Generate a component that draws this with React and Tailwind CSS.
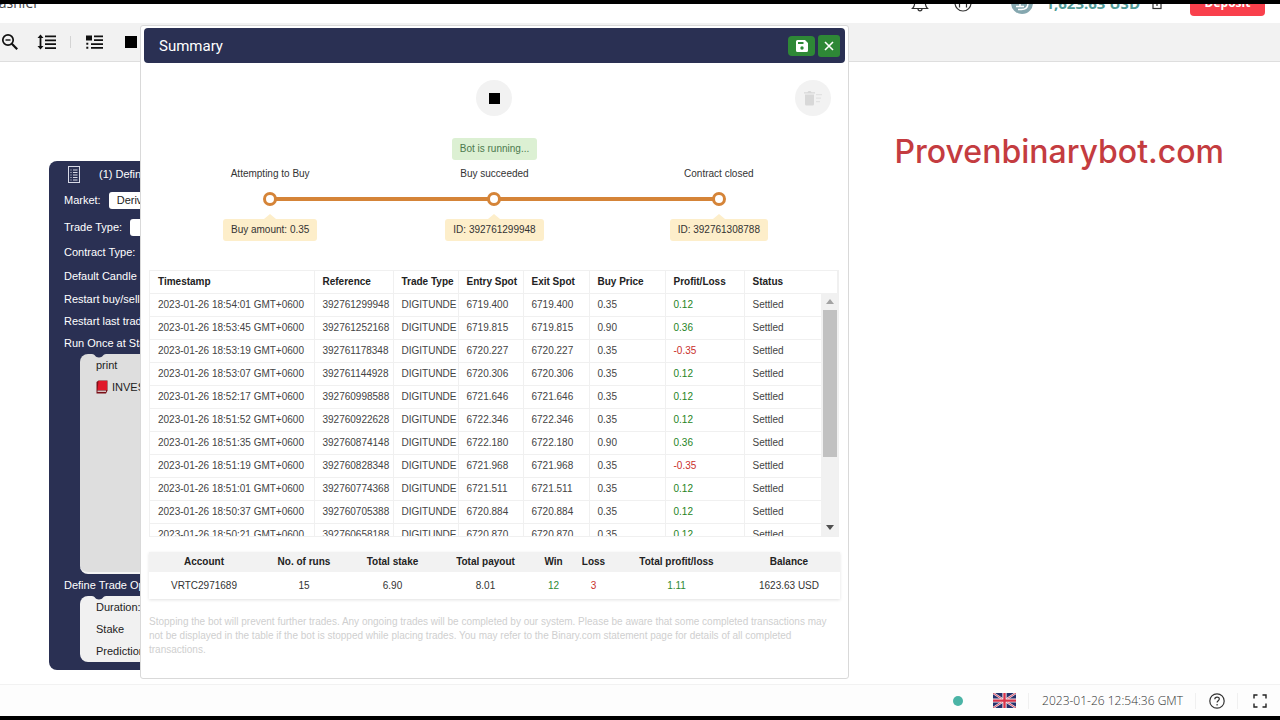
import React, { useState } from 'react';

const transactions = [
    { time: '2023-01-26 18:54:01 GMT+0600', ref: '392761299948', spot: '6719.400', price: '0.35', profit: '0.12' },
    { time: '2023-01-26 18:53:45 GMT+0600', ref: '392761252168', spot: '6719.815', price: '0.90', profit: '0.36' },
    { time: '2023-01-26 18:53:19 GMT+0600', ref: '392761178348', spot: '6720.227', price: '0.35', profit: '-0.35' },
    { time: '2023-01-26 18:53:07 GMT+0600', ref: '392761144928', spot: '6720.306', price: '0.35', profit: '0.12' },
    { time: '2023-01-26 18:52:17 GMT+0600', ref: '392760998588', spot: '6721.646', price: '0.35', profit: '0.12' },
    { time: '2023-01-26 18:51:52 GMT+0600', ref: '392760922628', spot: '6722.346', price: '0.35', profit: '0.12' },
    { time: '2023-01-26 18:51:35 GMT+0600', ref: '392760874148', spot: '6722.180', price: '0.90', profit: '0.36' },
    { time: '2023-01-26 18:51:19 GMT+0600', ref: '392760828348', spot: '6721.968', price: '0.35', profit: '-0.35' },
    { time: '2023-01-26 18:51:01 GMT+0600', ref: '392760774368', spot: '6721.511', price: '0.35', profit: '0.12' },
    { time: '2023-01-26 18:50:37 GMT+0600', ref: '392760705388', spot: '6720.884', price: '0.35', profit: '0.12' },
    { time: '2023-01-26 18:50:21 GMT+0600', ref: '392760658188', spot: '6720.870', price: '0.35', profit: '0.12' },
];

const columns = [
    { title: 'Timestamp', width: 'w-[164px]' },
    { title: 'Reference', width: 'w-[79px]' },
    { title: 'Trade Type', width: 'w-[65px]' },
    { title: 'Entry Spot', width: 'w-[65px]' },
    { title: 'Exit Spot', width: 'w-[66px]' },
    { title: 'Buy Price', width: 'w-[76px]' },
    { title: 'Profit/Loss', width: 'w-[79px]' },
    { title: 'Status', width: 'w-auto' },
];

const totals = [
    { title: 'Account', value: 'VRTC2971689', width: 'w-[110px]' },
    { title: 'No. of runs', value: '15', width: 'w-[90px]' },
    { title: 'Total stake', value: '6.90', width: 'w-[87px]' },
    { title: 'Total payout', value: '8.01', width: 'w-[99px]' },
    { title: 'Win', value: '12', width: 'w-[37px]', color: 'text-[#2f8a34]' },
    { title: 'Loss', value: '3', width: 'w-[43px]', color: 'text-[#c9302c]' },
    { title: 'Total profit/loss', value: '1.11', width: 'w-[123px]', color: 'text-[#2f8a34]' },
    { title: 'Balance', value: '1623.63 USD', width: 'w-auto' },
];

const steps = [
    { label: 'Attempting to Buy', tag: 'Buy amount: 0.35' },
    { label: 'Buy succeeded', tag: 'ID: 392761299948' },
    { label: 'Contract closed', tag: 'ID: 392761308788' },
];

const ZoomOutIcon = () => (
    <svg width="18" height="18" viewBox="0 0 18 18" fill="none" stroke="#111" strokeWidth="1.7">
        <circle cx="7" cy="7" r="5.2" />
        <path d="M4.5 7h5" strokeWidth="1.4" />
        <path d="M10.8 10.8l5.4 5.4" strokeWidth="2.2" />
    </svg>
);

const SortIcon = () => (
    <svg width="20" height="16" viewBox="0 0 20 16" fill="#111">
        <path d="M3.5 0.5L6.5 4H4.4v8h2.1l-3 3.5L0.5 12h2.1V4H0.5z" />
        <path d="M8 1.5h11v1.8H8zM8 5.4h11v1.8H8zM8 9.3h11v1.8H8zM8 13.2h11V15H8z" />
    </svg>
);

const ListIcon = () => (
    <svg width="18" height="16" viewBox="0 0 18 16" fill="#111">
        <path d="M0 1.5h6v5H0zM8 1.5h9v1.7H8zM8 5.2h9v1.7H8zM5 9.2h12v1.7H5zM5 13h12v1.7H5zM0.3 8.8h2v2h-2zM0.3 12.8h2v2h-2z" />
    </svg>
);

const BellIcon = () => (
    <svg width="18" height="18" viewBox="0 0 18 18" fill="none" stroke="#333" strokeWidth="1.2">
        <path d="M1.5 14.5h15c-2-1.6-2.3-3.5-2.3-7.5a5.2 5.2 0 0 0-10.4 0c0 4-.3 5.9-2.3 7.5z" />
        <path d="M7 14.8a2 2 0 0 0 4 0" />
    </svg>
);

const GlobeIcon = () => (
    <svg width="18" height="18" viewBox="0 0 18 18" fill="none" stroke="#333" strokeWidth="1.2">
        <circle cx="9" cy="9" r="8" />
        <path d="M5.5 5v8.5M12.5 5v8.5M5.5 9.5h7" />
    </svg>
);

const CoinIcon = () => (
    <svg width="22" height="22" viewBox="0 0 22 22">
        <circle cx="11" cy="11" r="11" fill="#85a7af" />
        <path d="M7 4.5h3.5c4.5 0 6.5 2.8 6.5 6.500s-2 6.500-6.500 6.500H7M9 4.500v10h2.500M5 14.500h8" fill="none" stroke="#fff" strokeWidth="1.5" />
    </svg>
);

const LockIcon = () => (
    <svg width="10" height="14" viewBox="0 0 10 14" fill="none" stroke="#333" strokeWidth="1.2">
        <rect x="1" y="4" width="8" height="8.5" />
        <path d="M3 4V1h4v3M5 7v3" />
    </svg>
);

const BlockIcon = () => (
    <svg width="12" height="17" viewBox="0 0 12 17" fill="none" stroke="#d7d9e6" strokeWidth="1">
        <rect x="0.5" y="0.5" width="11" height="16" />
        <path d="M2.5 4h1M5 4h4.5M2.5 6.5h1M5 6.5h4.5M2.5 9h1M5 9h4.5M2.5 11.5h1M5 11.5h4.5M2.5 14h1M5 14h4.5" />
    </svg>
);

const BookIcon = () => (
    <svg width="12" height="14" viewBox="0 0 12 14">
        <path d="M2.5 0.5H11.5V10.5L10 13.5H0.5V2z" fill="#7a1018" />
        <path d="M2.5 1H11V10H1.5z" fill="#e0182a" />
        <path d="M1.5 11.2h8.5" stroke="#eee" strokeWidth="1.2" />
    </svg>
);

const SaveIcon = () => (
    <svg width="12" height="12" viewBox="0 0 12 12">
        <path d="M1.5 0h7.5l3 3v7.5a1.5 1.5 0 0 1-1.5 1.5h-9A1.5 1.5 0 0 1 0 10.5v-9A1.5 1.5 0 0 1 1.5 0z" fill="#fff" />
        <path d="M2 2h5.5v2H2z" fill="#2e8836" />
        <circle cx="6" cy="8" r="1.7" fill="#2e8836" />
    </svg>
);

const CloseIcon = () => (
    <svg width="10" height="10" viewBox="0 0 10 10" stroke="#fff" strokeWidth="1.6">
        <path d="M1 1l8 8M9 1l-8 8" />
    </svg>
);

const ClearIcon = () => (
    <svg width="20" height="16" viewBox="0 0 20 16" fill="#d8d8d8">
        <path d="M2 4.5h9v9.5a1.5 1.5 0 0 1-1.5 1.5h-6A1.5 1.5 0 0 1 2 14zM1 2.2h3.5L5.5 1h2l1 1.2H12v1.3H1z" />
        <path d="M13 4h6v1.3h-6zM13 7.5h5v1.3h-5zM13 11h4v1.3h-4z" fill="#e2e2e2" />
    </svg>
);

const FlagIcon = () => (
    <svg width="23" height="15" viewBox="0 0 60 40" preserveAspectRatio="none">
        <path d="M0 0h60v40H0z" fill="#25306b" />
        <path d="M0 0l60 40M60 0L0 40" stroke="#f3e6ec" strokeWidth="6" />
        <path d="M0 0l60 40M60 0L0 40" stroke="#d8445a" strokeWidth="2.5" />
        <path d="M30 0v40M0 20h60" stroke="#f3e6ec" strokeWidth="11" />
        <path d="M30 0v40M0 20h60" stroke="#d8344a" strokeWidth="6" />
    </svg>
);

const HelpIcon = () => (
    <svg width="16" height="16" viewBox="0 0 16 16" fill="none" stroke="#333" strokeWidth="1.2">
        <circle cx="8" cy="8" r="7.2" />
        <path d="M5.8 6.3c0-3 4.5-2.9 4.5-.2 0 1.7-2.2 1.7-2.2 3.5M8.1 11v1.4" />
    </svg>
);

const FullscreenIcon = () => (
    <svg width="14" height="14" viewBox="0 0 14 14" fill="none" stroke="#222" strokeWidth="1.4">
        <path d="M1 4.5V1h3.5M9.5 1H13v3.5M13 9.5V13H9.5M4.5 13H1V9.5" />
    </svg>
);

// The bump that joins two stacked blocks
const Notch = () => (
    <svg className="absolute left-3 top-0" width="14" height="4" viewBox="0 0 14 4">
        <path d="M0 0h14c-3 0-3 3.5-7 3.5S3 0 0 0z" fill="#2a3053" />
    </svg>
);

const Header = () => (
    <header className="h-[19px] overflow-hidden flex items-end bg-white">
        <div className="h-10 w-full flex items-center justify-between pr-[15px]">
            <a href="#cashier" className="-ml-[10px] text-sm leading-4 text-[#444] font-['Open_Sans',sans-serif]">Cashier</a>
            <div className="flex items-center">
                <button aria-label="Notifications" className="mr-[25px]"><BellIcon /></button>
                <button aria-label="Language" className="mr-[39px]"><GlobeIcon /></button>
                <CoinIcon />
                <span className="ml-3 text-[15px] leading-4 font-bold text-[#4f9a96] font-['Open_Sans',sans-serif]">1,623.63 USD</span>
                <span className="ml-3 mr-7"><LockIcon /></span>
                <button className="w-[75px] h-[26px] rounded bg-[#f9404c] text-white text-xs font-bold font-['Open_Sans',sans-serif]">Deposit</button>
            </div>
        </div>
    </header>
);

const Toolbar = () => (
    <div className="h-[39px] flex items-center bg-[#f2f2f2] border-b border-[#dedede] pl-px">
        <button aria-label="Zoom out"><ZoomOutIcon /></button>
        <button aria-label="Sort blocks" className="ml-[18px]"><SortIcon /></button>
        <span className="w-px h-3 bg-[#d4d4d4] ml-[13px]" />
        <button aria-label="Show list" className="ml-[15px]"><ListIcon /></button>
        <button aria-label="Stop" className="ml-[21px] w-3 h-3 bg-black" />
    </div>
);

const TradeBlock = () => (
    <div className="absolute left-[49px] top-[99px] w-[300px] pt-px pb-2 rounded-lg bg-[#2a3053] text-white text-[11px] leading-4 whitespace-nowrap">
        <div className="h-6 flex items-center pl-[19px] gap-[19px]">
            <BlockIcon />
            <span>(1) Define your trade contract</span>
        </div>
        <div className="pl-[15px]">
            <div className="h-7 flex items-center gap-2">
                <label htmlFor="market">Market:</label>
                <select id="market" className="appearance-none w-24 h-[17px] rounded-[3px] bg-white text-[#222] pl-2">
                    <option>Derived</option>
                </select>
            </div>
            <div className="h-[26px] flex items-center gap-2">
                <label htmlFor="trade-type">Trade Type:</label>
                <select id="trade-type" className="appearance-none w-24 h-[17px] rounded-[3px] bg-white text-[#222] pl-3">
                    <option>Digits</option>
                </select>
            </div>
            <div className="h-6 flex items-center">Contract Type:</div>
            <div className="h-6 flex items-center">Default Candle Interval:</div>
            <div className="h-[22px] flex items-center">Restart buy/sell on error</div>
            <div className="h-[22px] flex items-center">Restart last trade on error</div>
            <div className="h-[22px] flex items-center">Run Once at Start:</div>
        </div>
        <div className="relative h-[220px] ml-[31px] pl-4 rounded-lg bg-[#dedede] border-b-2 border-[#f4f4f4] text-[#222]">
            <Notch />
            <div className="h-[22px] flex items-center">print</div>
            <div className="h-[22px] flex items-center gap-1"><BookIcon /> INVESTMENT</div>
        </div>
        <div className="h-[22px] flex items-center pl-[15px]">Define Trade Options</div>
        <div className="relative ml-[31px] pl-4 rounded-lg bg-[#f1f1f1] text-[#222]">
            <Notch />
            <div className="h-[22px] flex items-center">Duration:</div>
            <div className="h-[22px] flex items-center">Stake</div>
            <div className="h-[22px] flex items-center">Prediction:</div>
        </div>
    </div>
);

const ProgressSteps = () => (
    <div className="relative grid grid-cols-3 mx-[9px] mt-1 text-[#333]">
        <div className="absolute left-1/6 right-1/6 top-[33px] h-1 bg-[#d58438]" />
        {steps.map(step => (
            <div key={step.label} className="relative flex flex-col items-center">
                <span className="leading-5">{step.label}</span>
                <span className="mt-2 w-[14px] h-[14px] rounded-full bg-white border-3 border-[#d58438]" />
                <span className="mt-2 w-0 h-0 border-x-6 border-x-transparent border-b-5 border-b-[#fdeeca]" />
                <span className="h-[22px] px-2 flex items-center rounded-[3px] bg-[#fdeeca]">{step.tag}</span>
            </div>
        ))}
    </div>
);

const TransactionTable = () => (
    <div className="relative mt-[29px] mr-px h-[267px] overflow-hidden border border-[#f0f0f0]">
        <table className="w-full table-fixed border-collapse text-left text-[#444] whitespace-nowrap">
            <thead>
                <tr className="h-[22px] text-[#222]">
                    {columns.map(col => (
                        <th key={col.title} className={`${col.width} pl-2 border-r border-b border-[#f0f0f0] font-bold`}>{col.title}</th>
                    ))}
                </tr>
            </thead>
            <tbody>
                {transactions.map(t => (
                    <tr key={t.ref} className="h-[23px] [&>td]:pl-2 [&>td]:border-r [&>td]:border-b [&>td]:border-[#f0f0f0]">
                        <td>{t.time}</td>
                        <td>{t.ref}</td>
                        <td>DIGITUNDE</td>
                        <td>{t.spot}</td>
                        <td>{t.spot}</td>
                        <td>{t.price}</td>
                        <td className={t.profit.startsWith('-') ? 'text-[#c9302c]' : 'text-[#1f8424]'}>{t.profit}</td>
                        <td>Settled</td>
                    </tr>
                ))}
            </tbody>
        </table>
        <div className="absolute right-0 top-[22px] bottom-0 w-[17px] flex flex-col items-center bg-[#f1f1f1]">
            <span className="my-[6px] w-0 h-0 border-x-4 border-x-transparent border-b-5 border-b-[#a3a3a3]" />
            <span className="w-[14px] h-[147px] bg-[#c1c1c1]" />
            <span className="mt-auto mb-[6px] w-0 h-0 border-x-4 border-x-transparent border-t-5 border-t-[#505050]" />
        </div>
    </div>
);

const TotalsTable = () => (
    <table className="w-full table-fixed mt-[15px] text-center text-[#333] shadow-[0_1px_3px_rgba(0,0,0,0.12)]">
        <thead>
            <tr className="h-5 bg-[#f2f2f2] text-[#222]">
                {totals.map(col => <th key={col.title} className={`${col.width} font-bold`}>{col.title}</th>)}
            </tr>
        </thead>
        <tbody>
            <tr className="h-[27px]">
                {totals.map(col => <td key={col.title} className={col.color}>{col.value}</td>)}
            </tr>
        </tbody>
    </table>
);

const SummaryDialog = ({ onClose }) => (
    <section aria-label="Summary" className="absolute left-[140px] top-[21px] w-[709px] pb-[21px] bg-white border border-[#d9d9d9] rounded-[3px] text-[10px] leading-[14px]">
        <div className="mt-[2px] mx-[3px] h-[35px] flex items-center pl-[15px] pr-[5px] rounded bg-[#2a3053]">
            <h2 className="grow text-[15px] text-white font-['Roboto',sans-serif]">Summary</h2>
            <button aria-label="Save" className="w-[27px] h-5 flex items-center justify-center rounded bg-[#2e8836]"><SaveIcon /></button>
            <button aria-label="Close" onClick={onClose} className="ml-[3px] w-[22px] h-[22px] flex items-center justify-center rounded-[3px] bg-[#2e8836]"><CloseIcon /></button>
        </div>
        <div className="px-2 pt-[17px]">
            <div className="grid grid-cols-3 items-center px-[9px]">
                <button aria-label="Stop bot" className="col-start-2 justify-self-center w-9 h-9 flex items-center justify-center rounded-full bg-[#f2f2f2]">
                    <span className="w-[11px] h-[11px] bg-black" />
                </button>
                <button aria-label="Clear transactions" disabled className="justify-self-end w-9 h-9 flex items-center justify-center rounded-full bg-[#f2f2f2]">
                    <ClearIcon />
                </button>
            </div>
            <div className="mt-[22px] flex justify-center">
                <span className="h-[22px] px-2 flex items-center rounded-[3px] bg-[#dcf0d3] text-[#4c7a4d]">Bot is running...</span>
            </div>
            <ProgressSteps />
            <TransactionTable />
            <TotalsTable />
            <p className="mt-4 text-[#cfcfcf]">
                Stopping the bot will prevent further trades. Any ongoing trades will be completed by our system. Please be aware that some completed transactions may not be displayed in the table if the bot is stopped while placing trades. You may refer to the Binary.com statement page for details of all completed transactions.
            </p>
        </div>
    </section>
);

const Footer = () => (
    <footer className="h-8 flex items-center justify-end pr-[13px] bg-[#fdfdfd] border-t border-[#f2f2f2]">
        <span className="w-[10px] h-[10px] rounded-full bg-[#4bb4a6]" />
        <button aria-label="Language: English" className="ml-[30px]"><FlagIcon /></button>
        <span className="ml-3 w-px h-4 bg-[#f0f0f0]" />
        <time className="ml-[13px] text-xs text-[#333] font-light font-['Open_Sans',sans-serif]">2023-01-26 12:54:36 GMT</time>
        <span className="ml-3 w-px h-4 bg-[#f0f0f0]" />
        <button aria-label="Help" className="ml-[13px]"><HelpIcon /></button>
        <span className="ml-3 w-px h-4 bg-[#f0f0f0]" />
        <button aria-label="Full screen" className="ml-[15px]"><FullscreenIcon /></button>
    </footer>
);

const App = () => {
    const [isSummaryOpen, setIsSummaryOpen] = useState(true);

    return (
        <div className="relative min-h-screen flex flex-col overflow-hidden bg-white border-y-4 border-black font-['Liberation_Sans',Arial,sans-serif]">
            <Header />
            <Toolbar />
            <main className="relative grow">
                <TradeBlock />
                <p className="text-right pr-14 pt-[70px] text-[32px] leading-10 font-medium text-[#c43c40] font-['Inter',sans-serif]">Provenbinarybot.com</p>
            </main>
            <Footer />
            {isSummaryOpen && <SummaryDialog onClose={() => setIsSummaryOpen(false)} />}
        </div>
    );
};

export default App;
